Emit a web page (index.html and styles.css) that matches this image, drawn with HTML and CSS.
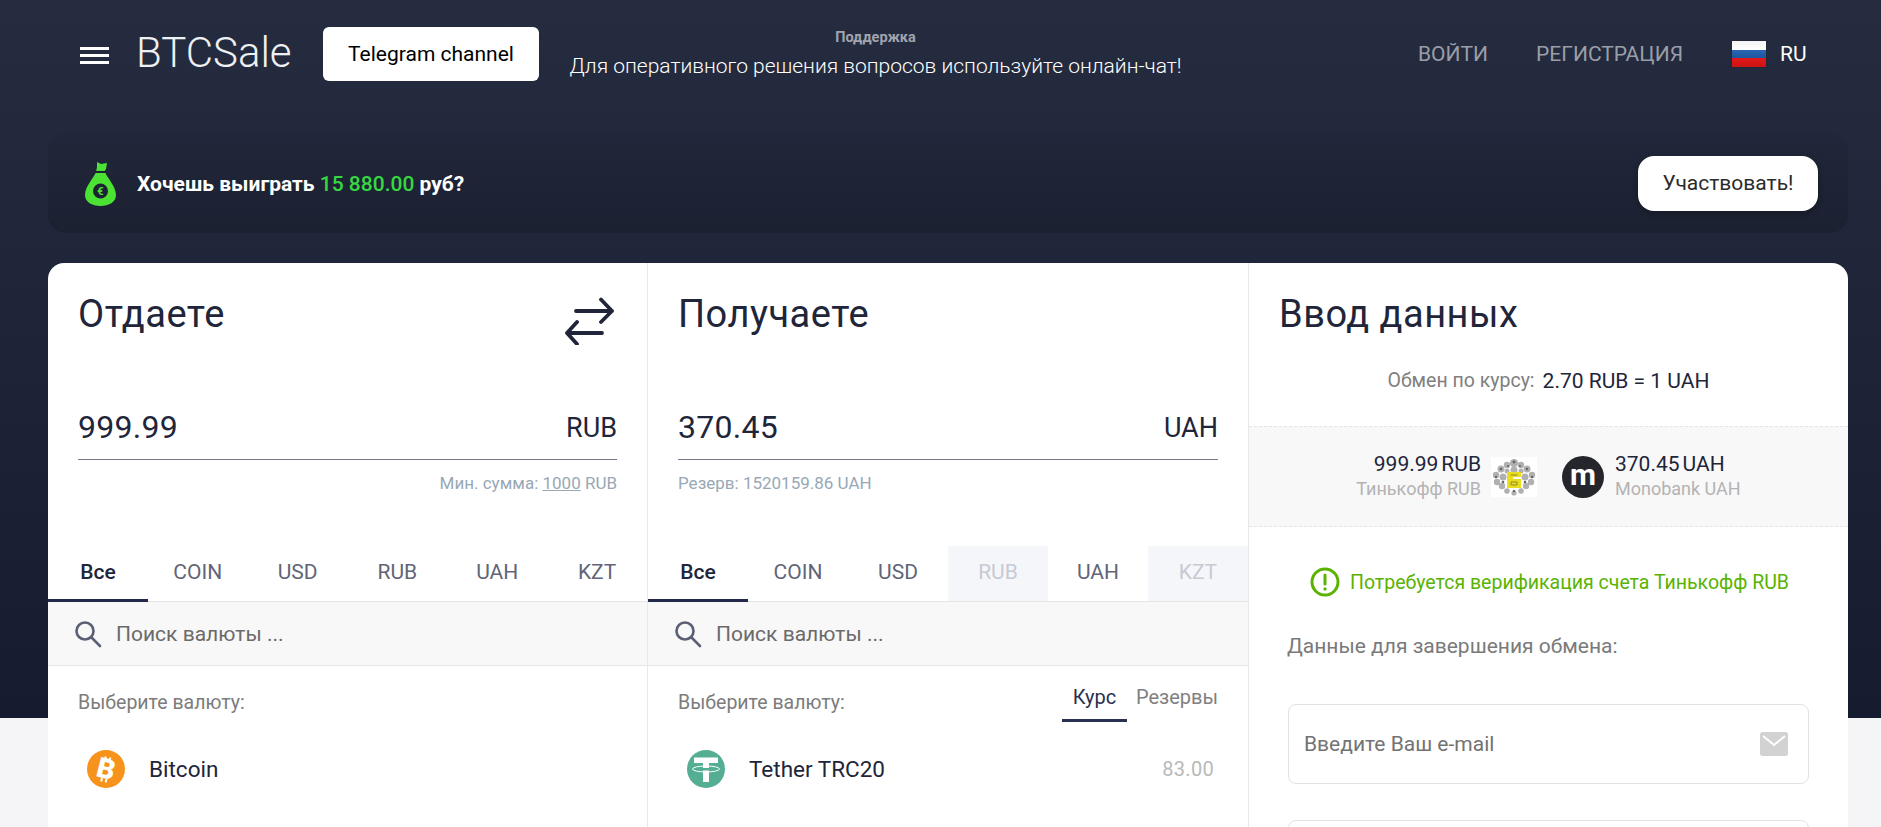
FILE: index.html
```html
<!DOCTYPE html>
<html lang="ru">
<head>
<meta charset="utf-8">
<title>BTCSale</title>
<link rel="stylesheet" href="styles.css">
</head>
<body>
<header class="topbar">
  <button class="burger" aria-label="Меню"><span></span><span></span><span></span></button>
  <a class="logo">BTCSale</a>
  <a class="tg">Telegram channel</a>
  <div class="support">
    <div class="support-title">Поддержка</div>
    <div class="support-text">Для оперативного решения вопросов используйте онлайн-чат!</div>
  </div>
  <nav class="nav">
    <a class="nav-link">ВОЙТИ</a>
    <a class="nav-link">РЕГИСТРАЦИЯ</a>
    <span class="flag"></span>
    <span class="lang">RU</span>
  </nav>
</header>

<section class="promo">
  <svg class="bag" viewBox="0 0 31 45" width="31" height="45">
    <path d="M12 1l4 2 6-1-1 6-2 3h-8l1-5z" fill="#4be234"/>
    <rect x="10" y="10" width="11" height="1.400" fill="#1c2233"/>
    <path d="M10.500 12h10c1 4 10.500 13 10.500 22 0 7-7 11-15.500 11S0 41 0 34c0-9 9.500-18 10.500-22z" fill="#4be234"/>
    <circle cx="15.500" cy="30" r="7.500" fill="#1c2233"/>
    <text x="15.500" y="34" class="bag-euro">€</text>
  </svg>
  <p class="promo-text">Хочешь выиграть <span class="promo-sum">15 880.00</span> руб?</p>
  <a class="promo-btn">Участвовать!</a>
</section>

<main class="card">
  <section class="col">
    <div class="head">
      <h2 class="title">Отдаете</h2>
      <svg class="swap" viewBox="0 0 50 48" width="50" height="48" fill="none" stroke="#21253a" stroke-width="3.800" stroke-linecap="round" stroke-linejoin="round">
        <path d="M12 14h36M37 2.500L48 14 37 25"/>
        <path d="M38 36H3M13 25L3 36l10 11"/>
      </svg>
    </div>
    <div class="amount"><span class="amount-val">999.99</span><span class="amount-cur">RUB</span></div>
    <p class="hint hint-right">Мин. сумма: <u>1000</u> RUB</p>
    <div class="tabs">
      <a class="tab active">Все</a><a class="tab">COIN</a><a class="tab">USD</a><a class="tab">RUB</a><a class="tab">UAH</a><a class="tab">KZT</a>
    </div>
    <div class="search">
      <svg class="search-ico" viewBox="0 0 28 28" width="28" height="28" fill="none" stroke="#5b5f73" stroke-width="2.600" stroke-linecap="round"><circle cx="11" cy="11" r="8.500"/><path d="M17.500 17.500L26 26"/></svg>
      <span class="search-text">Поиск валюты ...</span>
    </div>
    <div class="choose"><span class="choose-label">Выберите валюту:</span></div>
    <div class="coin">
      <svg class="coin-ico" viewBox="0 0 38 38" width="38" height="38">
        <circle cx="19" cy="19" r="19" fill="#f7931a"/>
        <g stroke="#fff" stroke-width="2"><path d="M18.800 6.500l-.8 3.500M23.300 7.500l-.8 3.500M15 28l-.8 3.500M19.500 29l-.8 3.500"/></g>
        <text x="19" y="28.500" class="btc-b" transform="rotate(14 19 19)">B</text>
      </svg>
      <span class="coin-name">Bitcoin</span>
    </div>
  </section>

  <section class="col">
    <div class="head"><h2 class="title">Получаете</h2></div>
    <div class="amount"><span class="amount-val">370.45</span><span class="amount-cur">UAH</span></div>
    <p class="hint">Резерв: 1520159.86 UAH</p>
    <div class="tabs">
      <a class="tab active">Все</a><a class="tab">COIN</a><a class="tab">USD</a><a class="tab off">RUB</a><a class="tab">UAH</a><a class="tab off">KZT</a>
    </div>
    <div class="search">
      <svg class="search-ico" viewBox="0 0 28 28" width="28" height="28" fill="none" stroke="#5b5f73" stroke-width="2.600" stroke-linecap="round"><circle cx="11" cy="11" r="8.500"/><path d="M17.500 17.500L26 26"/></svg>
      <span class="search-text">Поиск валюты ...</span>
    </div>
    <div class="choose">
      <span class="choose-label">Выберите валюту:</span>
      <div class="sort"><a class="sort-item current">Курс</a><a class="sort-item">Резервы</a></div>
    </div>
    <div class="coin">
      <svg class="coin-ico" viewBox="0 0 38 38" width="38" height="38">
        <circle cx="19" cy="19" r="19" fill="#53ae94"/>
        <path d="M7 7.500h24v5.500h-9v5h-6v-5H7zM16 20.500h6V32h-6z" fill="#fff"/>
        <ellipse cx="19" cy="19" rx="13.500" ry="3" fill="none" stroke="#fff" stroke-width="1"/>
      </svg>
      <span class="coin-name">Tether TRC20</span>
      <span class="coin-rate">83.00</span>
    </div>
  </section>

  <section class="col col-data">
    <div class="head"><h2 class="title">Ввод данных</h2></div>
    <div class="rate"><span class="rate-label">Обмен по курсу:</span><span class="rate-val">2.70 RUB = 1 UAH</span></div>
    <div class="summary">
      <div class="sum-side sum-left">
        <div class="sum-main">999.99<i class="sum-cur">RUB</i></div>
        <div class="sum-sub">Тинькофф RUB</div>
      </div>
      <svg class="tink" viewBox="0 0 46 40" width="46" height="40">
        <rect width="46" height="40" fill="#fff"/>
        <g class="tink-crest">
          <g fill="#b0b0b0">
            <circle cx="23" cy="6" r="4"/><circle cx="16" cy="8" r="3.200"/><circle cx="30" cy="8" r="3.200"/>
            <circle cx="10" cy="12" r="3.500"/><circle cx="36" cy="12" r="3.500"/><circle cx="5" cy="18" r="3.200"/><circle cx="41" cy="18" r="3.200"/>
            <circle cx="6" cy="25" r="3.200"/><circle cx="40" cy="25" r="3.200"/><circle cx="11" cy="29" r="3.200"/><circle cx="35" cy="29" r="3.200"/>
            <circle cx="16" cy="34" r="2.800"/><circle cx="30" cy="34" r="2.800"/><circle cx="23" cy="36" r="2.600"/>
            <circle cx="12" cy="20" r="3.500"/><circle cx="34" cy="20" r="3.500"/><circle cx="23" cy="13" r="3.500"/><circle cx="16" cy="14" r="2.500"/><circle cx="30" cy="14" r="2.500"/>
          </g>
          <g fill="#666"><circle cx="23" cy="5" r="1.400"/><circle cx="10" cy="12" r="1.300"/><circle cx="36" cy="12" r="1.300"/><circle cx="5" cy="20" r="1.200"/><circle cx="41" cy="20" r="1.200"/><circle cx="12" cy="25" r="1.300"/><circle cx="34" cy="25" r="1.300"/><circle cx="17" cy="9" r="1"/><circle cx="29" cy="9" r="1"/><circle cx="23" cy="34" r="1.200"/></g>
        </g>
        <path d="M16 15h14v5h-8v2h8v9H16z" fill="#eadc1e"/>
        <path d="M19.500 18h7M20 25h6v3h-6z" stroke="#8d8a2c" stroke-width="1" fill="none"/>
      </svg>
      <svg class="mono" viewBox="0 0 42 42" width="42" height="42">
        <circle cx="21" cy="21" r="21" fill="#25262b"/>
        <text x="21" y="29" class="mono-m">m</text>
      </svg>
      <div class="sum-side">
        <div class="sum-main">370.45<i class="sum-cur">UAH</i></div>
        <div class="sum-sub">Monobank UAH</div>
      </div>
    </div>
    <div class="verify">
      <svg class="verify-ico" viewBox="0 0 30 30" width="30" height="30" fill="none" stroke="#59b300" stroke-width="3"><circle cx="15" cy="15" r="13"/><path d="M15 8v9" stroke-linecap="round"/><circle cx="15" cy="22" r="1.200" fill="#59b300" stroke-width="1"/></svg>
      <span class="verify-text">Потребуется верификация счета Тинькофф RUB</span>
    </div>
    <p class="data-label">Данные для завершения обмена:</p>
    <div class="field">
      <span class="field-text">Введите Ваш e-mail</span>
      <svg class="mail" viewBox="0 0 28 24" width="28" height="24"><rect width="28" height="24" rx="2.500" fill="#d2d2d2"/><path d="M3 4l11 9 11-9" fill="none" stroke="#fff" stroke-width="2"/></svg>
    </div>
    <div class="field"></div>
  </section>
</main>
</body>
</html>
```
FILE: styles.css
```css
* { box-sizing: border-box; }
html, body { height: 827px; }
body {
  margin: 0;
  overflow: hidden;
  font-family: Roboto, "Noto Sans", sans-serif;
  color: #21253a;
  background: #f5f5f7 linear-gradient(180deg, #262c3f 0, #151c30 100%) no-repeat 0 0 / 100% 718px;
}
a { text-decoration: none; }
p, h2 { margin: 0; }

.topbar {
  display: flex;
  align-items: flex-start;
  height: 133px;
  padding: 27px 0 0 80px;
  color: #fff;
}
.burger {
  display: flex;
  flex-direction: column;
  gap: 4px;
  width: 29px;
  margin: 20px 27px 0 0;
  padding: 0;
  border: 0;
  background: none;
}
.burger span { display: block; height: 3px; background: #fff; }
.logo {
  width: 187px;
  color: #eef0f3;
  font-size: 42px;
  font-weight: 300;
  line-height: 52px;
}
.tg {
  width: 216px;
  height: 54px;
  border-radius: 6px;
  background: #fff;
  color: #000;
  font-size: 21px;
  line-height: 54px;
  text-align: center;
}
.support { width: 613px; margin: 2px 0 0 30px; text-align: center; }
.support-title { color: #a0a4ae; font-size: 14.500px; font-weight: 700; line-height: 18px; }
.support-text { margin-top: 6px; font-size: 21px; font-weight: 300; line-height: 26px; white-space: nowrap; }
.nav { display: flex; align-items: center; height: 54px; margin-left: 236px; font-size: 21px; }
.nav-link { color: #9a9ea8; margin-right: 48px; }
.flag {
  width: 34px;
  height: 26px;
  margin: 0 14px 0 1px;
  background: linear-gradient(180deg, #f4f4f4 0, #fff 33%, #2a66b3 34%, #1d569f 66%, #e01818 67%, #cc1414 100%);
  box-shadow: 0 0 1px rgba(0,0,0,.5);
}
.lang { color: #fff; }

.promo {
  display: flex;
  align-items: center;
  width: 1800px;
  height: 100px;
  margin-left: 48px;
  padding: 0 30px 0 37px;
  border-radius: 18px;
  background: linear-gradient(180deg, #21273a 0, #1b2131 100%);
}
.bag-euro { fill: #4be234; font-size: 11px; font-weight: 700; text-anchor: middle; font-family: Roboto, sans-serif; }
.promo-text { margin-left: 21px; padding-top: 2px; flex: 1; color: #fff; font-size: 21px; font-weight: 700; }
.promo-sum { color: #37d742; font-weight: 500; }
.promo-btn {
  width: 180px;
  height: 55px;
  border-radius: 16px;
  background: #fff;
  box-shadow: 0 2px 6px rgba(0,0,0,.3);
  color: #2b2b2b;
  font-size: 21px;
  line-height: 55px;
  text-align: center;
}

.card {
  display: grid;
  grid-template-columns: 600px 601px 599px;
  width: 1800px;
  height: 564px;
  margin: 30px 0 0 48px;
  border-radius: 16px 16px 0 0;
  background: #fff;
  overflow: hidden;
}
.col { border-right: 1px solid #e8e8ea; }
.col-data { border-right: 0; }
.head {
  display: flex;
  justify-content: space-between;
  height: 100px;
  padding: 30px 33px 0 30px;
}
.title { font-size: 38px; font-weight: 400; line-height: 42px; letter-spacing: .5px; }
.swap { margin-top: 4px; }

.amount {
  display: flex;
  justify-content: space-between;
  align-items: center;
  height: 97px;
  margin: 0 30px;
  padding: 37px 0 6px;
  border-bottom: 1.500px solid #77798a;
}
.amount-val { font-size: 32px; letter-spacing: .3px; }
.amount-cur { margin-top: 3px; font-size: 27px; }
.hint { height: 86px; margin: 0 30px; padding-top: 13px; color: #98a8b5; font-size: 17px; line-height: 20px; }
.hint-right { text-align: right; }

.tabs { display: flex; height: 56px; border-bottom: 1px solid #e4e4e6; }
.tab {
  display: block;
  width: 100px;
  color: #616577;
  font-size: 21px;
  line-height: 52px;
  text-align: center;
}
.tab.active { color: #21253a; font-weight: 500; border-bottom: 3px solid #22294a; height: 56px; }
.tab.off { background: #f5f6fa; color: #c6cad3; }

.search {
  display: flex;
  align-items: center;
  height: 64px;
  padding-left: 26px;
  background: #f8f8f8;
  border-bottom: 1px solid #e6e6e6;
}
.search-text { margin-left: 14px; color: #6a6a6a; font-size: 21px; }

.choose {
  display: flex;
  justify-content: space-between;
  height: 84px;
  padding: 24px 30px 0 30px;
}
.choose-label { color: #7c7c7c; font-size: 19.500px; line-height: 26px; }
.sort { display: flex; margin-top: -9px; height: 48px; }
.sort-item { padding: 0 0 0 9px; color: #808080; font-size: 20px; line-height: 32px; }
.sort-item.current { width: 65px; padding: 0; text-align: center; color: #2a3050; border-bottom: 3px solid #2a3050; height: 41px; }

.coin { display: flex; align-items: center; height: 38px; padding: 0 34px 0 39px; }
.coin-name { margin-left: 24px; flex: 1; font-size: 22.500px; }
.coin-rate { color: #b9b9b9; font-size: 20px; letter-spacing: .3px; }
.btc-b { fill: #fff; font-size: 28px; font-weight: 900; text-anchor: middle; font-family: Roboto, sans-serif; }

.rate { display: flex; justify-content: center; height: 63px; padding-top: 5px; font-size: 19.500px; line-height: 26px; gap: 8px; }
.rate-label { color: #808080; }
.rate-val { color: #21253a; font-size: 21px; }
.summary {
  display: flex;
  justify-content: center;
  align-items: center;
  height: 101px;
  background: #f8f8f8;
  border-top: 1px dashed #e6e6e6;
  border-bottom: 1px dashed #e6e6e6;
}
.sum-side { line-height: 24px; }
.sum-left { text-align: right; }
.sum-main { font-size: 21px; }
.sum-cur { font-style: normal; margin-left: 3px; }
.sum-sub { color: #b3b3b3; font-size: 18px; margin-top: 1px; }
.tink { margin: 0 25px 0 10px; }
.tink-crest { filter: blur(.3px); }
.mono { margin-right: 11px; }
.mono-m { fill: #fff; font-size: 30px; font-weight: 700; text-anchor: middle; font-family: Roboto, sans-serif; }

.verify { display: flex; justify-content: center; align-items: center; margin-top: 39px; height: 32px; padding-left: 2px; gap: 10px; }
.verify-text { color: #59b300; font-size: 19.500px; }
.data-label { margin: 32px 0 0 38px; color: #7a7a7a; font-size: 21px; line-height: 32px; }
.field {
  display: flex;
  justify-content: space-between;
  align-items: center;
  width: 521px;
  height: 80px;
  margin: 42px 0 0 39px;
  padding: 0 20px 0 15px;
  border: 1px solid #e2e2e4;
  border-radius: 8px;
}
.field + .field { margin-top: 36px; }
.field-text { color: #737373; font-size: 21px; }
```
